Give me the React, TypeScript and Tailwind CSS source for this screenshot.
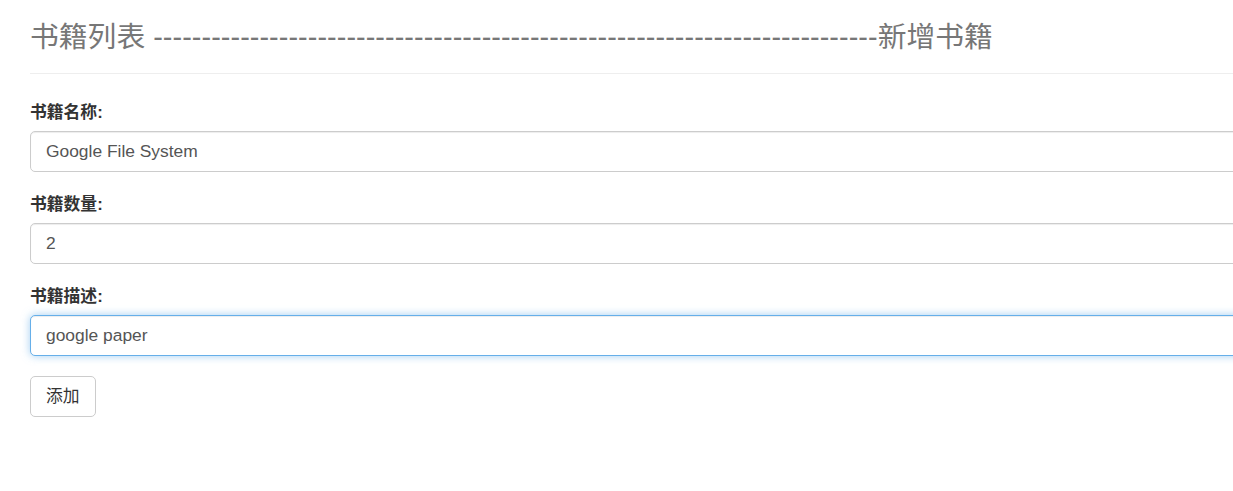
const font = {
  fontFamily: '"Liberation Sans", "Noto Sans CJK SC", sans-serif',
};

function Field({ label, value, focused = false }: { label: string; value: string; focused?: boolean }) {
  return (
    <div className="mb-[20px]">
      <label className="block h-[25px] mb-[6px] text-[16.8px] leading-[25px] font-bold text-[#333]">{label}</label>
      <input
        readOnly
        value={value}
        className={`block w-[1250px] h-[41px] px-[15px] rounded-[5px] border text-[17.4px] text-[#555] bg-white outline-none ${
          focused
            ? 'border-[#66afe9] shadow-[inset_0_1px_1px_rgba(0,0,0,0.075),0_0_8px_rgba(102,175,233,0.6)]'
            : 'border-[#ccc] shadow-[inset_0_1px_1px_rgba(0,0,0,0.075)]'
        }`}
        style={font}
      />
    </div>
  );
}

export default function App() {
  return (
    <div className="bg-white min-h-[491px] overflow-hidden pl-[30px] pt-[18px]" style={font}>
      <div className="w-[1250px] border-b border-[#eee] pb-[17px] mb-[26px]">
        <h3 className="text-[28.8px] leading-[38px] text-[#777] font-normal whitespace-nowrap">
          书籍列表 <span className="tracking-[0.07px]">{'-'.repeat(75)}</span>新增书籍
        </h3>
      </div>
      <Field label="书籍名称:" value="Google File System" />
      <Field label="书籍数量:" value="2" />
      <Field label="书籍描述:" value="google paper" focused />
      <button className="h-[41px] px-[15px] border border-[#ccc] rounded-[5px] bg-white text-[16.8px] text-[#333]">
        添加
      </button>
    </div>
  );
}
